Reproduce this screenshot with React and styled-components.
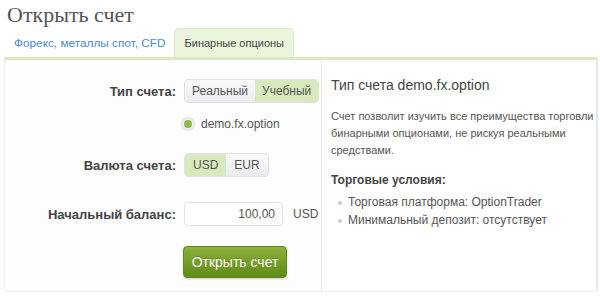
import React from 'react'
import styled, { createGlobalStyle } from 'styled-components'

const GlobalStyle = createGlobalStyle`
  body {
    margin: 0;
    background: #fff;
    font-family: "Liberation Sans", Arial, sans-serif;
    color: #444;
  }
`

export default function App() {
  return (
    <>
      <GlobalStyle />
      <Page>
        <Title>Открыть счет</Title>
        <Tabs>
          <Tab>Форекс, металлы спот, CFD</Tab>
          <Tab $active>Бинарные опционы</Tab>
        </Tabs>
        <Panel>
          <Form>
            <Row>
              <Label>Тип счета:</Label>
              <Segmented>
                <Segment>Реальный</Segment>
                <Segment $on>Учебный</Segment>
              </Segmented>
            </Row>
            <RadioRow>
              <Radio />
              <span>demo.fx.option</span>
            </RadioRow>
            <Row $top={22}>
              <Label>Валюта счета:</Label>
              <Segmented>
                <Segment $on $narrow>USD</Segment>
                <Segment $narrow>EUR</Segment>
              </Segmented>
            </Row>
            <Row $top={25}>
              <Label>Начальный баланс:</Label>
              <Input>100,00</Input>
              <Unit>USD</Unit>
            </Row>
            <ButtonRow>
              <Submit>Открыть счет</Submit>
            </ButtonRow>
          </Form>
          <Info>
            <InfoTitle>Тип счета demo.fx.option</InfoTitle>
            <Text>
              Счет позволит изучить все преимущества торговли бинарными опционами, не рискуя реальными средствами.
            </Text>
            <SubTitle>Торговые условия:</SubTitle>
            <List>
              <li>Торговая платформа: OptionTrader</li>
              <li>Минимальный депозит: отсутствует</li>
            </List>
          </Info>
        </Panel>
      </Page>
    </>
  )
}

const Page = styled.div`
  width: 600px;
  height: 296px;
  padding: 0 2px 0 4px;
  box-sizing: border-box;
`

const Title = styled.h1`
  margin: 0;
  padding: 4px 0 0 3px;
  height: 28px;
  box-sizing: border-box;
  font-family: "Liberation Serif", "Times New Roman", serif;
  font-weight: normal;
  font-size: 22px;
  line-height: 22px;
  color: #555;
`

const Tabs = styled.div`
  display: flex;
  align-items: flex-end;
  height: 29px;
`

const Tab = styled.div`
  height: 29px;
  box-sizing: border-box;
  padding: ${p => p.$active ? '0 9px 0 10px' : '0 7px 0 9px'};
  display: flex;
  align-items: center;
  font-size: ${p => p.$active ? '11px' : '11.8px'};
  color: ${p => p.$active ? '#444' : '#4a8ad6'};
  background: ${p => p.$active ? '#ebf4dd' : 'transparent'};
  border: 1px solid ${p => p.$active ? '#d8e8c2' : 'transparent'};
  border-bottom: none;
  border-radius: 5px 5px 0 0;
`

const Panel = styled.div`
  display: flex;
  height: 235px;
  border-top: 3px solid #d9e9c4;
  border-left: 1px dotted #ddd;
  border-bottom: 1px dotted #ddd;
  border-right: 2px solid #e8e8e8;
  border-radius: 0 0 4px 4px;
  box-sizing: border-box;
  background: #fdfdfd;
`

const Form = styled.div`
  width: 317px;
  padding-top: 19px;
  box-sizing: border-box;
  border-right: 1px dotted #ddd;
`

const Row = styled.div`
  display: flex;
  align-items: center;
  margin-top: ${p => p.$top || 0}px;
`

const Label = styled.div`
  width: 179px;
  padding-right: 8px;
  box-sizing: border-box;
  text-align: right;
  font-size: 13px;
  font-weight: bold;
  color: #444;
`

const Segmented = styled.div`
  display: flex;
  border: 1px solid #e2e2e2;
  border-radius: 4px;
  overflow: hidden;
`

const Segment = styled.div`
  height: 22px;
  padding: 0 ${p => p.$narrow ? '8px' : '7px'};
  display: flex;
  align-items: center;
  font-size: 12px;
  color: #555;
  background: ${p => p.$on ? '#d8eabd' : 'linear-gradient(#fafafa, #e9ebee)'};
`

const RadioRow = styled.div`
  display: flex;
  align-items: center;
  gap: 7px;
  margin: 14px 0 0 177px;
  font-size: 12px;
  color: #555;
`

const Radio = styled.span`
  width: 8px;
  height: 8px;
  border-radius: 50%;
  background: #8db84a;
  border: 2px solid #eee;
  box-shadow: 0 0 0 1px #ddd;
`

const Input = styled.div`
  width: 99px;
  height: 24px;
  box-sizing: border-box;
  padding-right: 7px;
  border: 1px solid #e2e2e2;
  border-radius: 4px;
  background: #fff;
  display: flex;
  align-items: center;
  justify-content: flex-end;
  font-size: 12px;
  color: #555;
`

const Unit = styled.span`
  margin-left: 10px;
  font-size: 12px;
  color: #555;
`

const ButtonRow = styled.div`
  padding: 20px 0 0 178px;
`

const Submit = styled.button`
  width: 104px;
  height: 32px;
  border: 1px solid #5f8a1c;
  border-radius: 4px;
  background: linear-gradient(#8cb23a, #5f8b17);
  color: #fff;
  font-family: "Liberation Sans", Arial, sans-serif;
  font-size: 14px;
  text-shadow: 0 -1px 0 rgba(0, 0, 0, 0.2);
  box-shadow: 0 1px 2px rgba(0, 0, 0, 0.2);
`

const Info = styled.div`
  flex: 1;
  padding: 17px 2px 0 9px;
  background: #fff;
`

const InfoTitle = styled.div`
  font-size: 14px;
  color: #444;
`

const Text = styled.p`
  margin: 15px 0 0 0;
  font-size: 11px;
  line-height: 17px;
  color: #555;
`

const SubTitle = styled.div`
  margin-top: 14px;
  font-size: 12px;
  font-weight: bold;
  color: #444;
`

const List = styled.ul`
  margin: 6px 0 0 0;
  padding: 0 0 0 7px;
  list-style: none;
  font-size: 12px;
  line-height: 18px;
  color: #555;

  li::before {
    content: '';
    display: inline-block;
    width: 4px;
    height: 4px;
    border-radius: 50%;
    background: #ccc;
    margin-right: 6px;
    vertical-align: middle;
  }
`
